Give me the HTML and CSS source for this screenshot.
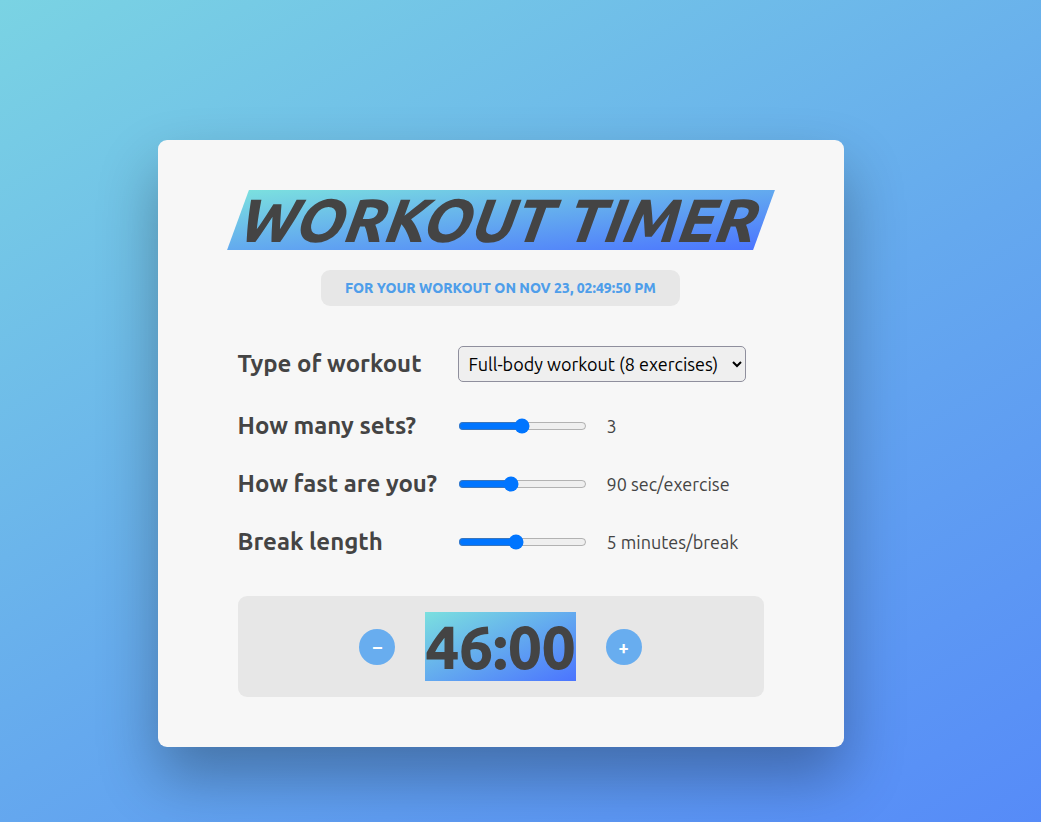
FILE: index.html
```html
<!DOCTYPE html>
<html lang="en">
<head>
  <meta charset="UTF-8">
  <meta name="viewport" content="width=device-width, initial-scale=1.0">
  <title>Workout Timer</title>
  <link rel="stylesheet" href="styles.css">
</head>
<body>

  <main class="card">
    <h1 class="title">Workout timer</h1>
    <time class="date">For your workout on Nov 23, 02:49:50 PM</time>

    <form class="inputs">
      <label for="type">Type of workout</label>
      <select id="type" name="type">
        <option>Full-body workout (8 exercises)</option>
        <option>Arms + Legs (6 exercises)</option>
        <option>Arms only (3 exercises)</option>
        <option>Legs only (4 exercises)</option>
        <option>Core only (4 exercises)</option>
      </select>

      <label for="sets">How many sets?</label>
      <div class="range">
        <input type="range" id="sets" min="1" max="5" value="3">
        <output for="sets">3</output>
      </div>

      <label for="speed">How fast are you?</label>
      <div class="range">
        <input type="range" id="speed" min="30" max="180" step="30" value="90">
        <output for="speed">90 sec/exercise</output>
      </div>

      <label for="rest">Break length</label>
      <div class="range">
        <input type="range" id="rest" min="1" max="10" value="5">
        <output for="rest">5 minutes/break</output>
      </div>
    </form>

    <section class="calculator">
      <button type="button" aria-label="Less time">–</button>
      <p class="total">46:00</p>
      <button type="button" aria-label="More time">+</button>
    </section>
  </main>

</body>
</html>
```
FILE: styles.css
```css
* {
  box-sizing: border-box;
  margin: 0;
  padding: 0;
}
body {
  min-height: 100vh;
  padding: 140px 40px 40px 0;
  font-family: Ubuntu, "Noto Sans", sans-serif;
  color: #444;
  background-image: linear-gradient(150deg, #7ad3e3, #65a9ee 55%, #568bf8);
}
.card {
  display: flex;
  flex-direction: column;
  align-items: center;
  max-width: 686px;
  margin: 0 auto;
  padding: 50px 80px;
  background-color: #f7f7f7;
  border-radius: 9px;
  box-shadow: 0 30px 60px rgba(0, 0, 0, 0.3);
}
.title {
  width: 100%;
  font-size: 61px;
  font-weight: 800;
  line-height: 60px;
  text-align: center;
  text-transform: uppercase;
  white-space: nowrap;
  background-image: linear-gradient(to bottom right, #7be0df, #4b74ff);
  transform: skewX(-20deg);
}
.date {
  margin: 20px 0 40px;
  padding: 8px 24px;
  font-size: 14px;
  font-weight: 800;
  line-height: 20px;
  text-transform: uppercase;
  color: #4f9eea;
  background-color: #e7e7e7;
  border-radius: 9px;
}
.inputs {
  display: grid;
  grid-template-columns: 198px 1fr;
  align-items: center;
  gap: 30px 22px;
  width: 100%;
  margin-bottom: 40px;
}
.inputs label {
  font-size: 24px;
  font-weight: 600;
  line-height: 28px;
  white-space: nowrap;
}
.inputs select {
  justify-self: start;
  width: 288px;
  height: 36px;
  padding: 0 6px;
  font-family: inherit;
  font-size: 18px;
  border: 1px solid #8f8f9d;
  border-radius: 5px;
}
.range {
  display: flex;
  align-items: center;
  gap: 20px;
  font-size: 18px;
}
.range input {
  width: 129px;
}
.calculator {
  display: flex;
  justify-content: center;
  align-items: center;
  gap: 30px;
  width: 100%;
  padding: 16px;
  background-color: #e7e7e7;
  border-radius: 9px;
}
.total {
  font-size: 60px;
  font-weight: 800;
  line-height: 69px;
  background-image: linear-gradient(to bottom right, #7be0df, #4b74ff);
}
.calculator button {
  width: 36px;
  height: 36px;
  font-family: inherit;
  font-size: 18px;
  font-weight: bold;
  color: #fff;
  background-color: #68adef;
  border: none;
  border-radius: 50%;
  cursor: pointer;
}
```
